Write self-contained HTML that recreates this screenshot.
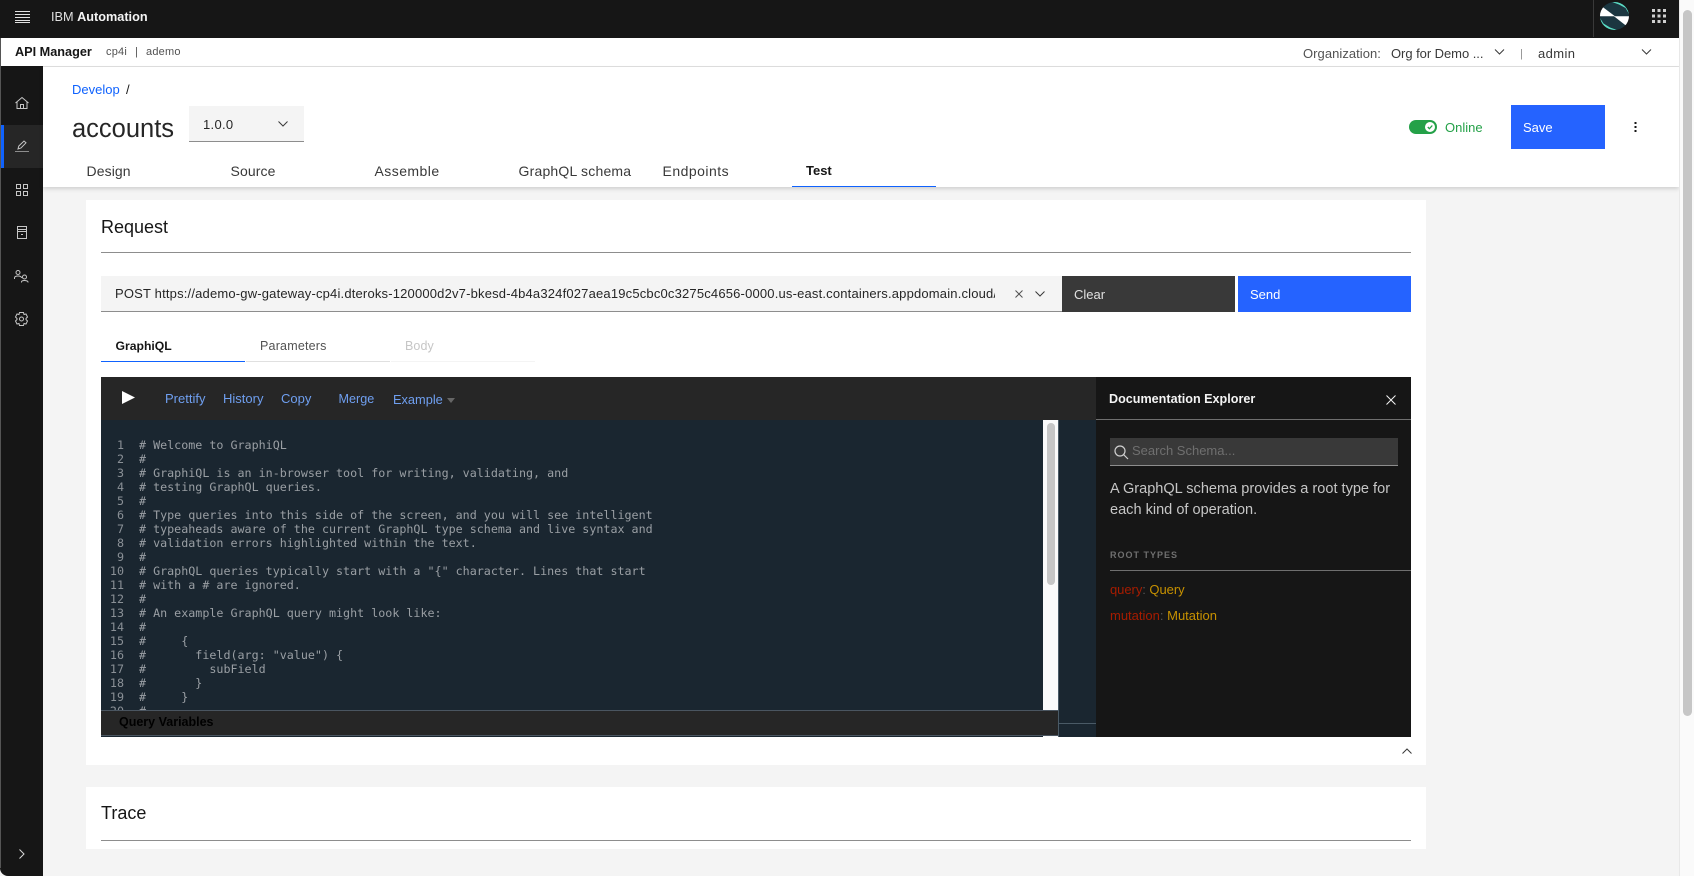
<!DOCTYPE html>
<html><head><meta charset="utf-8"><title>accounts</title>
<style>
html,body{margin:0;padding:0;width:1694px;height:876px;overflow:hidden;background:#f4f4f4;font-family:"Liberation Sans",sans-serif;color:#161616}
.a{position:absolute}
.t{position:absolute;white-space:nowrap;line-height:20px;font-size:13px}
svg{position:absolute;overflow:visible}
#code{position:absolute;left:101px;top:438px;width:942px;height:273px;overflow:hidden;font:11.7px/14px "DejaVu Sans Mono",monospace;color:#9a9fa4}
#code div{white-space:pre;height:14px}
#code i{display:inline-block;width:23px;text-align:right;margin-right:15px;font-style:normal;color:#8a9096}
</style></head><body>
<div class="a" style="left:0;top:0;width:1680px;height:876px;background:#f4f4f4"></div>
<!-- top bar -->
<div class="a" style="left:0;top:0;width:1679px;height:38px;background:#161616"></div>
<svg style="left:15px;top:11px" width="15" height="12" stroke="#e0e0e0" stroke-width="1"><path d="M0 .5H15M0 3.5H15M0 6.5H15M0 9.5H15M0 11.5H15"/></svg>
<div class="t" style="left:51px;top:7px;color:#e0e0e0;font-size:12.7px">IBM <b style="color:#f4f4f4">Automation</b></div>
<div class="a" style="left:1593px;top:0;width:1px;height:37px;background:#393939"></div>
<svg style="left:1600px;top:2px" width="29" height="28" viewBox="0 0 29 28"><defs><clipPath id="c"><ellipse cx="14.5" cy="14" rx="14.5" ry="14"/></clipPath></defs><g clip-path="url(#c)"><rect width="29" height="28" fill="#1b3640"/><path d="M0 3L15 14.200H0zM14 14.200H29V26z" fill="#fff"/><path d="M12 0H29V12L25.500 6L19 2.500zM0 16L3.500 21.500L10 25.500L17 28H0z" fill="#5adbc3"/></g></svg>
<svg style="left:1652px;top:9px" width="14" height="14" fill="#cfcfcf"><path d="M0 0h3v3H0zM5.500 0h3v3h-3zM11 0h3v3h-3zM0 5.500h3v3H0zM5.500 5.500h3v3h-3zM11 5.500h3v3h-3zM0 11h3v3H0zM5.500 11h3v3h-3zM11 11h3v3h-3z"/></svg>
<!-- sub header -->
<div class="a" style="left:0;top:38px;width:1679px;height:28px;background:#fff;border-bottom:1px solid #e0e0e0"></div>
<div class="t" style="left:15px;top:42px;font-weight:bold;font-size:12.7px">API Manager</div>
<div class="t" style="left:106px;top:42px;font-size:11px;letter-spacing:.2px;color:#525252">cp4i</div>
<div class="t" style="left:135px;top:42px;font-size:11px;color:#525252">|</div>
<div class="t" style="left:146px;top:42px;font-size:11px;letter-spacing:.2px;color:#525252">ademo</div>
<div class="t" style="left:1303px;top:44px;letter-spacing:.05px;color:#525252">Organization:</div>
<div class="t" style="left:1391px;top:44px;letter-spacing:-.05px;color:#393939">Org for Demo ...</div>
<svg style="left:1495px;top:49px" width="9" height="6" fill="none" stroke="#393939"><path d="M0 .5L4.5 5L9 .5"/></svg>
<div class="t" style="left:1520px;top:44px;font-size:11px;color:#8d8d8d">|</div>
<div class="t" style="left:1538px;top:44px;letter-spacing:.4px;color:#393939">admin</div>
<svg style="left:1642px;top:49px" width="9" height="6" fill="none" stroke="#393939"><path d="M0 .5L4.5 5L9 .5"/></svg>
<!-- side nav -->
<div class="a" style="left:0;top:66px;width:43px;height:810px;background:#161616;border-bottom-left-radius:8px"></div>
<div class="a" style="left:0;top:38px;width:1px;height:830px;background:#555"></div>
<div class="a" style="left:1px;top:125px;width:42px;height:43px;background:#262626"></div>
<div class="a" style="left:1px;top:125px;width:3px;height:43px;background:#0f62fe"></div>
<svg style="left:15px;top:97px" width="14" height="12" fill="none" stroke="#c6c6c6"><path d="M.5 6L7 .5L13.5 6M2 5V11.5H12V5M5.5 11.5V7.5H8.5V11.5"/></svg>
<svg style="left:15px;top:140px" width="14" height="12" fill="none" stroke="#c6c6c6"><path d="M0 11.5H14" stroke="#8d8d8d"/><path d="M3 9L3.8 6L9 1L11 2.8L6 8z"/></svg>
<svg style="left:16px;top:184px" width="12" height="12" fill="none" stroke="#c6c6c6"><path d="M.5.5h4v4h-4zM7.5.5h4v4h-4zM.5 7.5h4v4h-4zM7.5 7.5h4v4h-4z"/></svg>
<svg style="left:17px;top:226px" width="10" height="13" fill="none" stroke="#c6c6c6"><path d="M.5.5h9v12h-9zM.5 3.5h9M.5 5.5h9"/><path d="M4 8.5h2" /></svg>
<svg style="left:14px;top:270px" width="15" height="13" fill="none" stroke="#c6c6c6"><circle cx="4" cy="2.5" r="2"/><path d="M.5 9V8C.5 6.5 2 6 4 6S7.5 6.5 7.5 8"/><circle cx="10.5" cy="7" r="2"/><path d="M7.5 12.5V12C7.5 11 9 10.500 10.500 10.500S14 11 14 12V12.500"/></svg>
<svg style="left:15px;top:312px" width="13" height="14" viewBox="0 0 13 14" fill="none" stroke="#c6c6c6"><path d="M4.500.5H8.500L9 2.500L11 2L12.500 5L11 6.500V7.500L12.500 9L11 12L9 11.500L8.500 13.500H4.500L4 11.500L2 12L.5 9L2 7.500V6.500L.5 5L2 2L4 2.500z"/><circle cx="6.500" cy="7" r="2"/></svg>
<svg style="left:19px;top:849px" width="6" height="10" fill="none" stroke="#d8d8d8"><path d="M.5.5L5 5L.5 9.500"/></svg>
<!-- page header -->
<div class="a" style="left:43px;top:67px;width:1636px;height:120px;background:#fff;box-shadow:0 2px 4px rgba(0,0,0,.15)"></div>
<div class="t" style="left:72px;top:80px;color:#0f62fe">Develop</div>
<div class="t" style="left:126px;top:80px;color:#161616">/</div>
<div class="t" style="left:72px;top:114px;font-size:25.5px;line-height:30px;color:#262626">accounts</div>
<div class="a" style="left:189px;top:106px;width:115px;height:35px;background:#f4f4f4;border-bottom:1px solid #8d8d8d"></div>
<div class="t" style="left:203px;top:115px;letter-spacing:.3px;color:#262626">1.0.0</div>
<svg style="left:278px;top:121px" width="10" height="6" fill="none" stroke="#393939"><path d="M.500.500L5 5L9.500.500"/></svg>
<div class="t" style="left:86.500px;top:161px;font-size:14px;letter-spacing:.1px;color:#393939">Design</div>
<div class="t" style="left:230.500px;top:161px;font-size:14px;letter-spacing:.1px;color:#393939">Source</div>
<div class="t" style="left:374.500px;top:161px;font-size:14px;letter-spacing:.45px;color:#393939">Assemble</div>
<div class="t" style="left:518.500px;top:161px;font-size:14px;letter-spacing:.2px;color:#393939">GraphQL schema</div>
<div class="t" style="left:662.500px;top:161px;font-size:14px;letter-spacing:.48px;color:#393939">Endpoints</div>
<div class="t" style="left:806px;top:161px;font-size:13px;font-weight:bold;color:#161616">Test</div>
<div class="a" style="left:792px;top:186px;width:144px;height:1px;background:#0f62fe"></div>
<div class="a" style="left:1409px;top:120px;width:28px;height:14px;background:#24a148;border-radius:7px"></div>
<svg style="left:1425px;top:122px" width="10" height="10"><circle cx="5" cy="5" r="5" fill="#fff"/><path d="M2.800 5L4.400 6.700L7.300 3.500" fill="none" stroke="#24a148" stroke-width="1.300"/></svg>
<div class="t" style="left:1445px;top:118px;color:#24a148">Online</div>
<div class="a" style="left:1511px;top:105px;width:94px;height:44px;background:#2563ff"></div>
<div class="t" style="left:1523px;top:118px;color:#fff">Save</div>
<svg style="left:1634px;top:122px" width="4" height="10" fill="#161616"><path d="M.500 0h2v2h-2zM.500 4h2v2h-2zM.500 8h2v2h-2z"/></svg>
<!-- request card -->
<div class="a" style="left:86px;top:200px;width:1340px;height:565px;background:#fff"></div>
<div class="t" style="left:101px;top:217px;font-size:18px;color:#161616">Request</div>
<div class="a" style="left:101px;top:252px;width:1310px;height:1px;background:#8d8d8d"></div>
<div class="a" style="left:101px;top:276px;width:961px;height:35px;background:#f4f4f4;border-bottom:1px solid #8d8d8d"></div>
<div class="t" style="left:115px;top:284px;width:880px;overflow:hidden;letter-spacing:.18px;color:#262626">POST https://ademo-gw-gateway-cp4i.dteroks-120000d2v7-bkesd-4b4a324f027aea19c5cbc0c3275c4656-0000.us-east.containers.appdomain.cloud/</div>
<svg style="left:1015px;top:290px" width="8" height="8" fill="none" stroke="#525252"><path d="M.500.500L7.500 7.500M7.500.500L.500 7.500"/></svg>
<svg style="left:1035px;top:291px" width="10" height="6" fill="none" stroke="#393939"><path d="M.500.500L5 5L9.500.500"/></svg>
<div class="a" style="left:1062px;top:276px;width:173px;height:36px;background:#393939"></div>
<div class="t" style="left:1074px;top:285px;color:#e0e0e0">Clear</div>
<div class="a" style="left:1238px;top:276px;width:173px;height:36px;background:#2563ff"></div>
<div class="t" style="left:1250px;top:285px;color:#fff">Send</div>
<div class="t" style="left:115.500px;top:336px;font-weight:bold;font-size:12.200px;color:#161616">GraphiQL</div>
<div class="a" style="left:101px;top:361px;width:144px;height:1px;background:#0f62fe"></div>
<div class="t" style="left:260px;top:336px;font-size:12.500px;letter-spacing:.2px;color:#525252">Parameters</div>
<div class="a" style="left:246px;top:361px;width:144px;height:1px;background:#e0e0e0"></div>
<div class="t" style="left:405px;top:336px;font-size:12.500px;letter-spacing:.1px;color:#c6c6c6">Body</div>
<div class="a" style="left:391px;top:361px;width:144px;height:1px;background:#f4f4f4"></div>
<!-- graphiql -->
<div class="a" style="left:101px;top:377px;width:1310px;height:360px;background:#1a2630"></div>
<div class="a" style="left:101px;top:377px;width:995px;height:43px;background:#262626"></div>
<svg style="left:122px;top:391px" width="13" height="13"><path d="M0 0L13 6.500L0 13z" fill="#fff"/></svg>
<div class="t" style="left:165px;top:389px;color:#6f9ff0">Prettify</div>
<div class="t" style="left:223px;top:389px;color:#6f9ff0">History</div>
<div class="t" style="left:281px;top:389px;color:#6f9ff0">Copy</div>
<div class="t" style="left:338.500px;top:389px;font-size:12.600px;color:#6f9ff0">Merge</div>
<div class="t" style="left:393px;top:390px;font-size:12.800px;color:#6f9ff0">Example</div>
<svg style="left:447px;top:398px" width="8" height="5"><path d="M0 0H8L4 5z" fill="#666"/></svg>
<div id="code">
<div><i>1</i># Welcome to GraphiQL</div>
<div><i>2</i>#</div>
<div><i>3</i># GraphiQL is an in-browser tool for writing, validating, and</div>
<div><i>4</i># testing GraphQL queries.</div>
<div><i>5</i>#</div>
<div><i>6</i># Type queries into this side of the screen, and you will see intelligent</div>
<div><i>7</i># typeaheads aware of the current GraphQL type schema and live syntax and</div>
<div><i>8</i># validation errors highlighted within the text.</div>
<div><i>9</i>#</div>
<div><i>10</i># GraphQL queries typically start with a "{" character. Lines that start</div>
<div><i>11</i># with a # are ignored.</div>
<div><i>12</i>#</div>
<div><i>13</i># An example GraphQL query might look like:</div>
<div><i>14</i>#</div>
<div><i>15</i>#     {</div>
<div><i>16</i>#       field(arg: "value") {</div>
<div><i>17</i>#         subField</div>
<div><i>18</i>#       }</div>
<div><i>19</i>#     }</div>
<div><i>20</i>#</div>
</div>
<div class="a" style="left:1043px;top:420px;width:15px;height:317px;background:#fafafa"></div>
<div class="a" style="left:1047px;top:423px;width:8px;height:162px;background:#c6c6c6;border-radius:4px"></div>
<div class="a" style="left:1058px;top:420px;width:1px;height:317px;background:#4a5a66"></div>
<div class="a" style="left:1058px;top:723px;width:38px;height:1px;background:#4a5a66"></div>
<div class="a" style="left:101px;top:710px;width:957px;height:26px;background:#262626;border-top:1px solid #4a5560;border-bottom:1px solid #4a5560;box-sizing:border-box"></div>
<div class="t" style="left:119px;top:712px;font-weight:bold;font-size:12.500px;color:#000">Query Variables</div>
<!-- docs -->
<div class="a" style="left:1096px;top:377px;width:315px;height:360px;background:#161616"></div>
<div class="a" style="left:1096px;top:419px;width:315px;height:1px;background:#6f6f6f"></div>
<div class="t" style="left:1109px;top:388.500px;font-weight:bold;font-size:12.600px;color:#f4f4f4">Documentation Explorer</div>
<svg style="left:1386px;top:395px" width="10" height="10" fill="none" stroke="#f4f4f4"><path d="M.500.500L9.500 9.500M9.500.500L.500 9.500"/></svg>
<div class="a" style="left:1110px;top:438px;width:288px;height:27px;background:#393939;border-bottom:1px solid #8d8d8d"></div>
<svg style="left:1114px;top:445px" width="15" height="15" fill="none" stroke="#d0d0d0" stroke-width="1.200"><circle cx="6" cy="6" r="5"/><path d="M9.500 9.500L14 14"/></svg>
<div class="t" style="left:1132px;top:441px;font-size:13px;color:#6f6f6f">Search Schema...</div>
<div class="t" style="left:1110px;top:478.500px;font-size:14.550px;color:#c6c6c6">A GraphQL schema provides a root type for</div>
<div class="t" style="left:1110px;top:500px;font-size:14.550px;color:#c6c6c6">each kind of operation.</div>
<div class="t" style="left:1110px;top:545px;font-size:9px;font-weight:bold;letter-spacing:1px;color:#6f6f6f">ROOT TYPES</div>
<div class="a" style="left:1110px;top:570px;width:301px;height:1px;background:#6f6f6f"></div>
<div class="t" style="left:1110px;top:580px;letter-spacing:-.05px;color:#a61c00">query<span style="color:#555">:</span> <span style="color:#c79100">Query</span></div>
<div class="t" style="left:1110px;top:606px;color:#a61c00">mutation<span style="color:#555">:</span> <span style="color:#c79100">Mutation</span></div>
<svg style="left:1402px;top:748px" width="10" height="6" fill="none" stroke="#393939"><path d="M.500 5.500L5 1L9.500 5.500"/></svg>
<!-- trace card -->
<div class="a" style="left:86px;top:787px;width:1340px;height:62px;background:#fff"></div>
<div class="t" style="left:101px;top:803px;font-size:18px;color:#161616">Trace</div>
<div class="a" style="left:101px;top:840px;width:1310px;height:1px;background:#8d8d8d"></div>
<!-- browser scrollbar -->
<div class="a" style="left:1679px;top:0;width:15px;height:876px;background:#fafafa;border-left:1px solid #e8e8e8;box-sizing:border-box"></div>
<div class="a" style="left:1683px;top:10px;width:9px;height:706px;background:#c6c6c6;border-radius:5px"></div>
</body></html>
